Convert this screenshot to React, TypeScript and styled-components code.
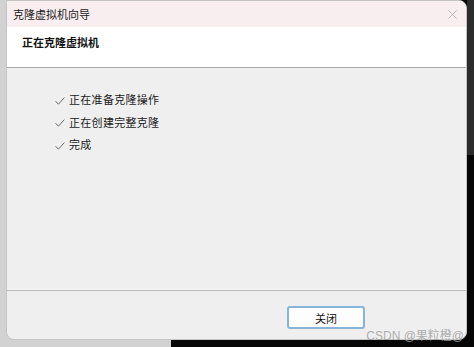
import * as React from 'react'
import styled, { createGlobalStyle } from 'styled-components'

const GlobalStyle = createGlobalStyle`
  html, body {
    margin: 0;
    padding: 0;
  }
  body {
    font-family: "Noto Sans CJK SC", "Noto Sans", sans-serif;
    -webkit-font-smoothing: antialiased;
  }
`

const steps = ['正在准备克隆操作', '正在创建完整克隆', '完成']

export default function App() {
  return (
    <>
      <GlobalStyle />
      <Screen>
        <Dialog>
          <TitleBar>
            <Title>克隆虚拟机向导</Title>
            <CloseGlyph viewBox="0 0 10 10" aria-hidden>
              <path d="M0.5 0.5 L9.5 9.5 M9.5 0.5 L0.5 9.5" />
            </CloseGlyph>
          </TitleBar>
          <Header>
            <Heading>正在克隆虚拟机</Heading>
          </Header>
          <Body>
            <StepList>
              {steps.map((s) => (
                <Step key={s}>
                  <Check viewBox="0 0 10 8" aria-hidden>
                    <path d="M0.6 4.2 L3.4 7.2 L9.4 0.6" />
                  </Check>
                  <span>{s}</span>
                </Step>
              ))}
            </StepList>
          </Body>
          <Footer>
            <Button>关闭</Button>
          </Footer>
        </Dialog>
        <Watermark>CSDN @果粒橙@</Watermark>
      </Screen>
    </>
  )
}

const Screen = styled.div`
  position: relative;
  width: 474px;
  height: 347px;
  overflow: hidden;
  padding-left: 6px;
  box-sizing: border-box;
  background:
    linear-gradient(#2c2c2c, #2c2c2c) right top / 7px 155px no-repeat,
    linear-gradient(to right, #d2d2d2 171px, #060606 171px);
`

const Dialog = styled.div`
  width: 461px;
  height: 340px;
  display: flex;
  flex-direction: column;
  box-sizing: border-box;
  border: 1px solid #c4c4c4;
  border-radius: 0 8px 8px 8px;
  overflow: hidden;
  background: #efefef;
`

const TitleBar = styled.div`
  height: 26px;
  flex: none;
  display: flex;
  align-items: center;
  justify-content: space-between;
  padding: 0 9px 0 6px;
  background: #f9eeef;
`

const Title = styled.span`
  font-size: 11px;
  color: #1a1a1a;
`

const CloseGlyph = styled.svg`
  width: 9px;
  height: 9px;
  fill: none;
  stroke: #b4b4b4;
  stroke-width: 1;
`

const Header = styled.div`
  height: 41px;
  flex: none;
  box-sizing: border-box;
  padding: 7px 0 0 15px;
  background: #fff;
  border-bottom: 1px solid #a8a8a8;
`

const Heading = styled.div`
  font-size: 11px;
  font-weight: 700;
  color: #111;
`

const Body = styled.div`
  flex: 1;
  padding: 23px 0 0 48px;
  border-bottom: 1px solid #b8b8b8;
  box-shadow: inset 0 -1px 0 #f7f7f7;
`

const StepList = styled.ul`
  list-style: none;
  margin: 0;
  padding: 0;
  display: flex;
  flex-direction: column;
  gap: 6.5px;
`

const Step = styled.li`
  display: flex;
  align-items: center;
  gap: 4px;
  height: 16px;
  font-size: 11px;
  letter-spacing: 0.3px;
  color: #1a1a1a;
`

const Check = styled.svg`
  width: 10px;
  height: 8px;
  margin-top: 3px;
  fill: none;
  stroke: #6a6a6a;
  stroke-width: 1;
`

const Footer = styled.div`
  height: 48px;
  flex: none;
  display: flex;
  align-items: flex-start;
  padding: 15px 0 0 280px;
  box-sizing: border-box;
`

const Button = styled.button`
  width: 78px;
  height: 23px;
  border: 2px solid #86b5dc;
  border-radius: 3px;
  background: #fdfdfd;
  font-family: "Noto Sans CJK SC", sans-serif;
  font-size: 11px;
  color: #111;
  padding: 0;
`

const Watermark = styled.div`
  position: absolute;
  right: 10px;
  bottom: 4px;
  font-family: "Liberation Sans", "Noto Sans CJK SC", sans-serif;
  font-size: 12px;
  color: rgba(160, 160, 160, 0.85);
`
